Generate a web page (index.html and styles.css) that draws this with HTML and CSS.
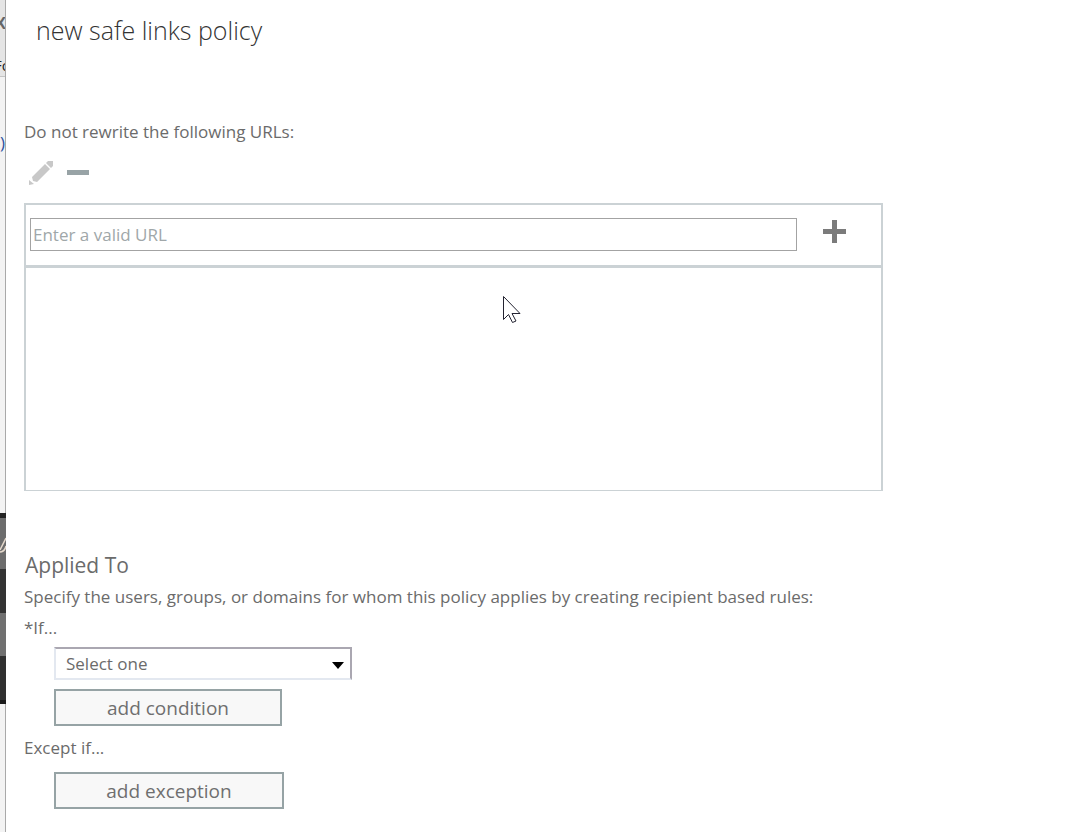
FILE: index.html
```html
<!DOCTYPE html>
<html lang="en">
<head>
<meta charset="utf-8">
<meta name="viewport" content="width=device-width, initial-scale=1">
<title>new safe links policy</title>
<link rel="stylesheet" href="styles.css">
</head>
<body>
<div class="backdrop" aria-hidden="true">
  <div class="backdrop-bar">
    <span class="backdrop-close">x</span>
    <span class="backdrop-menu">Fo</span>
  </div>
  <div class="backdrop-page"><span class="backdrop-paren">)</span></div>
  <div class="backdrop-photo">
    <svg class="backdrop-script" width="6" height="16" viewBox="0 0 6 16"><path d="M6 1C4 5 2 9 0 13M0 15C3 15 5 13 6 9" fill="none" stroke="#e4d8cb" stroke-width="1.5"/></svg>
  </div>
</div>
<main class="dialog">
  <h1 class="title">new safe links policy</h1>
  <section class="urls">
    <label class="text" for="url">Do not rewrite the following URLs:</label>
    <div class="toolbar">
      <button class="icon-button" type="button" aria-label="Edit">
        <svg width="26" height="26" viewBox="0 0 26 26"><path d="M4 17 17 4l5 5L9 22l-4-1zM18 3l2-2h5v5l-2 2zM1 25v-5l5 4z" fill="#c8c8c8"/></svg>
      </button>
      <button class="icon-button" type="button" aria-label="Remove">
        <svg width="22" height="26" viewBox="0 0 22 26"><path d="M0 10h22v5H0z" fill="#98a3a6"/></svg>
      </button>
    </div>
    <div class="list">
      <div class="entry">
        <input class="url-input" id="url" type="text" placeholder="Enter a valid URL">
        <button class="icon-button" type="button" aria-label="Add">
          <svg width="23" height="23" viewBox="0 0 23 23"><path d="M9 0h5v9h9v5h-9v9H9v-9H0V9h9z" fill="#7b7b7b"/></svg>
        </button>
      </div>
      <div class="items">
        <svg class="pointer" width="20" height="30" viewBox="0 0 20 30"><path d="M1.5 1.5v23l5-5 4 8 3.500-1.500-4-7.500h8z" fill="#fff" stroke="#222230" stroke-width="1"/></svg>
      </div>
    </div>
  </section>
  <section class="applied">
    <h2 class="heading">Applied To</h2>
    <p class="text">Specify the users, groups, or domains for whom this policy applies by creating recipient based rules:</p>
    <label class="text" for="condition">*If...</label>
    <div class="rule">
      <div class="picker">
        <select class="select" id="condition"><option>Select one</option></select>
        <svg class="arrow" width="12" height="7" viewBox="0 0 12 7"><path d="M0 0h12L6 7z" fill="#000"/></svg>
      </div>
      <button class="button" type="button">add condition</button>
    </div>
    <p class="text">Except if...</p>
    <div class="rule rule-except">
      <button class="button button-wide" type="button">add exception</button>
    </div>
  </section>
</main>
</body>
</html>
```
FILE: styles.css
```css
* { box-sizing: border-box; }
body {
  margin: 0;
  min-height: 100vh;
  display: flex;
  background: #fff;
  color: #6b6b6b;
  font-family: "Open Sans", "Noto Sans", sans-serif;
  font-size: 17px;
  line-height: 24px;
}
h1, h2, p { margin: 0; }

.backdrop {
  flex: 0 0 6px;
  position: relative;
  overflow: hidden;
  background: #f3f3f3;
}
.backdrop::after {
  content: "";
  position: absolute;
  inset: 0 0 0 auto;
  width: 1px;
  background: #a9a9a9;
}
.backdrop-bar { height: 77px; background: #e5e5e5; border-bottom: 1px solid #c4c4c4; }
.backdrop-page { height: 436px; }
.backdrop-close, .backdrop-menu, .backdrop-paren { position: absolute; white-space: nowrap; }
.backdrop-close { top: 9px; right: 0; font-size: 21px; font-weight: 600; color: #666; }
.backdrop-menu { top: 53px; left: -6px; font-size: 15px; color: #222; }
.backdrop-paren { top: 131px; right: 1px; font-size: 17px; color: #2b50a0; }
.backdrop-photo {
  position: relative;
  z-index: 1;
  height: 191px;
  padding-top: 24px;
  background: linear-gradient(#222 5px, #6c6c6c 5px 56px, #333 56px 100px, #707070 100px 143px, #303030 143px 187px, #1b1b1b 187px);
}
.backdrop-script { display: block; }

.dialog {
  flex: 1;
  min-width: 0;
  padding: 12px 18px 23px;
}
.title {
  padding-left: 12px;
  font-size: 25px;
  line-height: 36px;
  font-weight: 300;
  color: #333;
}
.urls { margin-top: 72px; }
.text { display: block; }
.toolbar { display: flex; gap: 13px; margin: 16px 0 17px 4px; }
.icon-button { padding: 0; border: 0; background: none; }
.icon-button svg { display: block; }

.list { max-width: 859px; border: 2px solid #cbd2d5; border-bottom-width: 1px; }
.entry {
  display: flex;
  align-items: center;
  gap: 26px;
  height: 63px;
  padding: 0 35px 2px 4px;
  border-bottom: 3px solid #cbd2d5;
}
.entry .icon-button { margin-bottom: 5px; }
.url-input {
  flex: 1;
  min-width: 0;
  height: 33px;
  padding: 0 2px;
  border: 1px solid #a3a3a3;
  font: inherit;
  color: inherit;
}
.url-input::placeholder { color: #a0a7a9; opacity: 1; }
.items { position: relative; height: 222px; }
.pointer { position: absolute; top: 27px; left: 476px; }

.applied { margin-top: 60px; }
.heading { margin-bottom: 6px; padding-left: 1px; font-size: 21px; line-height: 28px; font-weight: 400; }
.applied .text + .text { margin-top: 7px; }
.rule {
  display: flex;
  flex-direction: column;
  align-items: flex-start;
  gap: 9px;
  margin: 7px 0 10px 30px;
}
.rule-except { margin: 12px 0 0 30px; }
.picker { display: grid; align-items: center; width: 298px; }
.select, .arrow { grid-area: 1 / 1; }
.select {
  appearance: none;
  width: 100%;
  height: 33px;
  padding: 0 28px 0 10px;
  border: 2px solid;
  border-color: #aaa7b1 #aaa7b1 #e3e8f0 #e3e8f0;
  border-radius: 0;
  background: #fff;
  font: inherit;
  color: inherit;
}
.arrow { justify-self: end; margin: 4px 8px 0 0; pointer-events: none; }
.button {
  width: 228px;
  height: 37px;
  padding: 0;
  border: 2px solid #96a3a5;
  background: #f8f8f8;
  font: inherit;
  font-size: 19px;
  color: #6f6f6f;
}
.button-wide { width: 230px; }
```
